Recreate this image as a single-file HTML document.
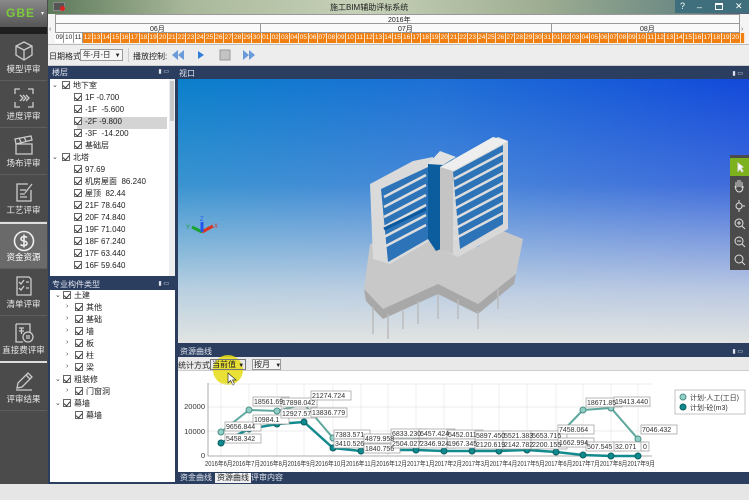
<!DOCTYPE html>
<html><head><meta charset="utf-8"><style>
*{margin:0;padding:0;box-sizing:border-box}
body{width:749px;height:500px;overflow:hidden;background:#e6e6e6;font-family:"Liberation Sans","Noto Sans CJK SC",sans-serif;font-size:8px;color:#222;position:relative}
.a{position:absolute;white-space:nowrap}
.side{left:0;top:0;width:48px;height:500px;background:#4b4b4b}
.nav{position:absolute;left:0;width:47px;height:47px;border-bottom:1px solid #5e5e5e;color:#e8e8e8;text-align:center;font-size:8.5px}
.nav span{position:absolute;left:0;right:0;bottom:5px}
.nav svg{position:absolute;left:13px;top:6px}
.hdr{background:#2b3e5f;color:#dfe4ee;font-size:8px;line-height:11px;padding-left:4px}
.tree{background:#fff}
.row{position:absolute;height:12px;line-height:12px;font-size:8px;white-space:nowrap}
.cb{display:inline-block;width:8px;height:8px;border:1px solid #666;vertical-align:-1px;margin-right:3px;position:relative;background:#fff}
.cb:after{content:"";position:absolute;left:1px;top:0px;width:3px;height:5px;border:solid #333;border-width:0 1px 1px 0;transform:rotate(40deg)}
.chev{position:absolute;font-size:7px;color:#444}
.days{left:55px;top:33px;height:10px;display:flex}
.days div{width:9.4px;height:10px;background:#f07f10;color:#fff;font-size:6.5px;line-height:10px;text-align:center;border-right:1px solid #fbe1c3}
.days div.w{background:#fff;color:#222;border-right:1px solid #999}
</style></head><body>

<div class="a" style="left:48px;top:0;width:701px;height:14px;background:linear-gradient(90deg,#5d7a5a,#a9b89a 20%,#c7d1b8 45%,#9fae92 70%,#6d8a84 90%,#557)"></div>
<div class="a" style="left:53px;top:2px;width:12px;height:9px;background:#555;border:1px solid #888"></div>
<div class="a" style="left:60px;top:6px;width:5px;height:5px;border-radius:50%;background:#d22"></div>
<div class="a" style="left:330px;top:2px;font-size:8px;color:#222">施工BIM辅助评标系统</div>
<div class="a" style="left:675px;top:0;width:74px;height:13px;background:#3f6f7c;color:#fff;font-size:9px;line-height:13px">
<span style="position:absolute;left:5px">?</span><span style="position:absolute;left:22px;top:-3px">_</span><span style="position:absolute;left:40px;top:3px;width:8px;height:7px;border:1px solid #fff;border-top-width:2px"></span><span style="position:absolute;left:60px">✕</span></div>

<div class="a" style="left:48px;top:14px;width:701px;height:31px;background:#f4f4f4;border-bottom:1px solid #bbb"></div>
<div class="a" style="left:55px;top:14px;width:685px;height:10px;border:1px solid #999;background:#fafafa"></div>
<div class="a" style="left:388px;top:15px;font-size:7px">2016年</div>
<div class="a" style="left:55px;top:24px;width:685px;height:9px;border:1px solid #999;border-top:none;background:#fafafa"></div>
<div class="a" style="left:260px;top:24px;width:1px;height:9px;background:#999"></div>
<div class="a" style="left:551px;top:24px;width:1px;height:9px;background:#999"></div>
<div class="a" style="left:150px;top:24px;font-size:7px">06月</div>
<div class="a" style="left:398px;top:24px;font-size:7px">07月</div>
<div class="a" style="left:640px;top:24px;font-size:7px">08月</div>
<div class="a" style="left:49px;top:26px;font-size:7px;color:#666">‹</div>
<div class="a" style="left:741px;top:26px;font-size:7px;color:#666">›</div>
<div class="a days">
<div class="w">09</div><div class="w">10</div><div class="w">11</div><div>12</div><div>13</div><div>14</div><div>15</div><div>16</div><div>17</div><div>18</div><div>19</div><div>20</div><div>21</div><div>22</div><div>23</div><div>24</div><div>25</div><div>26</div><div>27</div><div>28</div><div>29</div><div>30</div>
<div>01</div><div>02</div><div>03</div><div>04</div><div>05</div><div>06</div><div>07</div><div>08</div><div>09</div><div>10</div><div>11</div><div>12</div><div>13</div><div>14</div><div>15</div><div>16</div><div>17</div><div>18</div><div>19</div><div>20</div><div>21</div><div>22</div><div>23</div><div>24</div><div>25</div><div>26</div><div>27</div><div>28</div><div>29</div><div>30</div><div>31</div>
<div>01</div><div>02</div><div>03</div><div>04</div><div>05</div><div>06</div><div>07</div><div>08</div><div>09</div><div>10</div><div>11</div><div>12</div><div>13</div><div>14</div><div>15</div><div>16</div><div>17</div><div>18</div><div>19</div><div>20</div><div style="width:4px"></div>
</div>

<div class="a" style="left:48px;top:45px;width:701px;height:21px;background:#ededed;border-bottom:1px solid #ccc"></div>
<div class="a" style="left:49px;top:51px">日期格式:</div>
<div class="a" style="left:80px;top:49px;width:43px;height:12px;border:1px solid #999;background:#f6f6f6;line-height:10px;padding-left:2px;font-size:7.5px">年-月-日 <span style="font-size:6px;margin-left:2px">▼</span></div>
<div class="a" style="left:128px;top:48px;width:1px;height:14px;background:#ccc"></div>
<div class="a" style="left:133px;top:51px">播放控制:</div>
<svg class="a" style="left:171px;top:49px" width="90" height="12"><path d="M7 1L1 6L7 11ZM13 1L7 6L13 11Z" fill="#6b9bd8"/><path d="M27 2L33 6L27 10Z" fill="#2f7fd6"/><rect x="49" y="1" width="10" height="10" fill="#c4c4c4" stroke="#999"/><path d="M72 1L78 6L72 11ZM78 1L84 6L78 11Z" fill="#6b9bd8"/></svg>

<div class="a side">
<div class="a" style="left:0;top:0;width:47px;height:27px;background:linear-gradient(#8a8a8a,#555);"></div>
<div class="a" style="left:6px;top:6px;font-size:12px;font-weight:bold;color:#7dcb3a;letter-spacing:1px">GBE</div>
<div class="a" style="left:41px;top:10px;font-size:6px;color:#eee">▾</div>
<div class="a" style="left:0;top:27px;width:47px;height:7px;background:#1f1f1f"></div>
<div class="nav" style="top:34px"><svg width="22" height="22" viewBox="0 0 22 22" fill="none" stroke="#ccc" stroke-width="1.3"><path d="M11 2L19 6V15L11 20L3 15V6Z M3 6L11 10L19 6 M11 10V20"/></svg><span>模型评审</span></div>
<div class="nav" style="top:81px"><svg width="22" height="22" viewBox="0 0 22 22" fill="none" stroke="#ccc" stroke-width="1.3"><path d="M2 7V2H7M15 2H20V7M20 15V20H15M7 20H2V15M7 8L10 11L7 14M10 8L13 11L10 14M13 8L16 11L13 14"/></svg><span>进度评审</span></div>
<div class="nav" style="top:128px"><svg width="22" height="22" viewBox="0 0 22 22" fill="none" stroke="#ccc" stroke-width="1.3"><path d="M3 10H19V20H3Z M3 10L2 5L18 2L19 6Z M6 4L8 8M11 3L13 7"/></svg><span>场布评审</span></div>
<div class="nav" style="top:175px"><svg width="22" height="22" viewBox="0 0 22 22" fill="none" stroke="#ccc" stroke-width="1.3"><path d="M15 3H4V20H18V9 M7 9H13M7 13H12M7 16H14 M12 12L19 3"/></svg><span>工艺评审</span></div>
<div class="nav" style="top:222px;background:#6a6a6a;border-top:2px solid #ddd"><svg width="22" height="22" viewBox="0 0 22 22" fill="none" stroke="#eee" stroke-width="1.6"><circle cx="11" cy="11" r="9.5"/><path d="M14 7.5C13 6.5 8 6 8 9C8 12 14 10 14 13.5C14 16 9 16 7.5 14.5M11 4.5V17.5"/></svg><span style="color:#fff">资金资源</span></div>
<div class="nav" style="top:269px"><svg width="22" height="22" viewBox="0 0 22 22" fill="none" stroke="#ccc" stroke-width="1.3"><path d="M4 2H16L18 4V20H4Z M6 7L8 9L11 5M13 7H16M6 13L8 15L11 11M13 13H16"/></svg><span>清单评审</span></div>
<div class="nav" style="top:316px;border-bottom:2px solid #ddd"><svg width="22" height="22" viewBox="0 0 22 22" fill="none" stroke="#ccc" stroke-width="1.3"><path d="M3 2H17V10 M10 20H3V2 M6 6H11M8.5 6V12M6 9H11"/><circle cx="15" cy="15" r="5"/><path d="M13 14H17M13 16H17"/></svg><span>直接费评审</span></div>
<div class="nav" style="top:364px"><svg width="22" height="22" viewBox="0 0 22 22" fill="none" stroke="#ccc" stroke-width="1.3"><path d="M4 18L5 13L15 3L19 7L9 17Z M13 5L17 9 M3 20H19"/></svg><span>评审结果</span></div>
</div>

<div class="a" style="left:48px;top:66px;width:130px;height:418px;background:#2b3e5f"></div>
<div class="a hdr" style="left:48px;top:67px;width:127px;height:12px">楼层<span style="position:absolute;right:6px;font-size:6px">▮ ▭</span></div>
<div class="a tree" style="left:50px;top:79px;width:125px;height:197px;overflow:hidden">
<div class="a" style="right:0;top:0;width:6px;height:197px;background:#eee"></div>
<div class="a" style="right:1px;top:2px;width:4px;height:40px;background:#c8c8c8"></div>
<div class="a" style="left:27px;top:38px;width:90px;height:12px;background:#d4d4d4"></div>
<div class="chev" style="left:2px;top:2px">⌄</div>
<div class="row" style="left:12px;top:1px"><span class="cb"></span>地下室</div>
<div class="row" style="left:24px;top:13px"><span class="cb"></span>1F -0.700</div>
<div class="row" style="left:24px;top:25px"><span class="cb"></span>-1F &nbsp;-5.600</div>
<div class="row" style="left:24px;top:37px"><span class="cb"></span>-2F -9.800</div>
<div class="row" style="left:24px;top:49px"><span class="cb"></span>-3F &nbsp;-14.200</div>
<div class="row" style="left:24px;top:61px"><span class="cb"></span>基础层</div>
<div class="chev" style="left:2px;top:74px">⌄</div>
<div class="row" style="left:12px;top:73px"><span class="cb"></span>北塔</div>
<div class="row" style="left:24px;top:85px"><span class="cb"></span>97.69</div>
<div class="row" style="left:24px;top:97px"><span class="cb"></span>机房屋面 &nbsp;86.240</div>
<div class="row" style="left:24px;top:109px"><span class="cb"></span>屋顶 &nbsp;82.44</div>
<div class="row" style="left:24px;top:121px"><span class="cb"></span>21F 78.640</div>
<div class="row" style="left:24px;top:133px"><span class="cb"></span>20F 74.840</div>
<div class="row" style="left:24px;top:145px"><span class="cb"></span>19F 71.040</div>
<div class="row" style="left:24px;top:157px"><span class="cb"></span>18F 67.240</div>
<div class="row" style="left:24px;top:169px"><span class="cb"></span>17F 63.440</div>
<div class="row" style="left:24px;top:181px"><span class="cb"></span>16F 59.640</div>
</div>
<div class="a hdr" style="left:48px;top:279px;width:127px;height:11px">专业构件类型<span style="position:absolute;right:6px;font-size:6px">▮ ▭</span></div>
<div class="a tree" style="left:50px;top:290px;width:125px;height:192px">
<div class="chev" style="left:5px;top:1px">⌄</div>
<div class="row" style="left:13px;top:0px"><span class="cb"></span>土建</div>
<div class="chev" style="left:16px;top:13px">›</div><div class="row" style="left:25px;top:12px"><span class="cb"></span>其他</div>
<div class="chev" style="left:16px;top:25px">›</div><div class="row" style="left:25px;top:24px"><span class="cb"></span>基础</div>
<div class="chev" style="left:16px;top:37px">›</div><div class="row" style="left:25px;top:36px"><span class="cb"></span>墙</div>
<div class="chev" style="left:16px;top:49px">›</div><div class="row" style="left:25px;top:48px"><span class="cb"></span>板</div>
<div class="chev" style="left:16px;top:61px">›</div><div class="row" style="left:25px;top:60px"><span class="cb"></span>柱</div>
<div class="chev" style="left:16px;top:73px">›</div><div class="row" style="left:25px;top:72px"><span class="cb"></span>梁</div>
<div class="chev" style="left:5px;top:85px">⌄</div><div class="row" style="left:13px;top:84px"><span class="cb"></span>粗装修</div>
<div class="chev" style="left:16px;top:97px">›</div><div class="row" style="left:25px;top:96px"><span class="cb"></span>门窗洞</div>
<div class="chev" style="left:5px;top:109px">⌄</div><div class="row" style="left:13px;top:108px"><span class="cb"></span>幕墙</div>
<div class="row" style="left:25px;top:120px"><span class="cb"></span>幕墙</div>
</div>

<div class="a" style="left:178px;top:66px;width:571px;height:418px;background:#2b3e5f"></div>
<div class="a hdr" style="left:178px;top:69px;width:571px;height:10px;line-height:10px;padding-left:1px">视口<span style="position:absolute;right:6px;font-size:6px">▮ ▭</span></div>
<div class="a" style="left:178px;top:79px;width:571px;height:264px;background:linear-gradient(180deg,rgba(230,232,232,0) 0%,rgba(200,210,225,0.25) 40%,rgba(215,222,228,0.85) 80%,#e2e4e2 100%),linear-gradient(90deg,#0a7fcb 0%,#1d6fd6 45%,#1249da 100%)"></div>
<svg class="a" style="left:178px;top:79px" width="571" height="264">
<path d="M192 165L250 150L300 168L320 150L345 160L338 195L300 225L260 205L205 230L186 210Z" fill="#c8c8c8"/>
<path d="M186 210L205 230L260 205L300 225L338 195L336 205L300 235L260 215L205 240L188 222Z" fill="#a8a8a8"/>
<path d="M195 228V255M210 235V260M225 232V250M240 222V245M260 215V240M280 220V240M300 232V250M320 210V230" stroke="#bbb" stroke-width="1.5"/>
<path d="M192 105L235 82L255 78V160L212 185L195 180Z" fill="#dadada"/>
<path d="M203 110L250 88V160L210 183Z" fill="#2c73b8"/>
<path d="M206 118L248 96M206 128L248 106M206 138L248 116M206 148L248 126M206 158L248 136M206 168L248 146" stroke="#ddd" stroke-width="2.5"/>
<path d="M206 150L248 130" stroke="#0b5aa0" stroke-width="3"/>
<path d="M250 85L265 73L275 80V165L258 172L250 160Z" fill="#0b5d9e"/>
<path d="M250 85L262 72L278 78L265 86Z" fill="#e2e2e2"/>
<path d="M262 88L320 58L330 62V150L280 178L262 170Z" fill="#d8d8d8"/>
<path d="M275 93L325 66V145L282 170Z" fill="#2c73b8"/>
<path d="M276 100L325 74M276 110L325 84M276 120L325 94M276 130L325 104M276 140L325 114M276 150L325 124M276 160L325 134" stroke="#ddd" stroke-width="2.5"/>
<path d="M262 88L315 58L330 62L275 92Z" fill="#eee"/>
<path d="M262 88L275 92V175L262 170Z" fill="#c4c4c4"/>
<path d="M24 153L14 148M24 153L33 148" stroke="#19a32f" stroke-width="3"/>
<path d="M24 153L35 147" stroke="#d32" stroke-width="3"/>
<path d="M24 153V143" stroke="#2255ee" stroke-width="3"/>
<text x="22" y="142" font-size="6" fill="#2255ee">Z</text><text x="8" y="150" font-size="6" fill="#19a32f">Y</text><text x="36" y="149" font-size="6" fill="#d32">X</text>
</svg>
<div class="a" style="left:730px;top:155px;width:19px;height:115px;background:#4b4b4b"></div>
<div class="a" style="left:730px;top:158px;width:19px;height:18px;background:#7db11e"></div>
<svg class="a" style="left:730px;top:158px" width="19" height="112" fill="none" stroke="#ddd" stroke-width="1"><path d="M8 5L8 13L10 11L12 14L13 13L11 10L13 9Z" fill="#fff"/><path d="M6 30V24M8 29V22M10 29V22M12 30V24M5 28Q6 34 9 34Q13 34 13 28"/><circle cx="9" cy="48" r="3"/><path d="M9 42V45M9 51V54M12 48H15"/><circle cx="9" cy="65" r="4"/><path d="M12 68L15 71M7 65H11M9 63V67"/><circle cx="9" cy="83" r="4"/><path d="M12 86L15 89M7 83H11"/><circle cx="9" cy="101" r="4"/><path d="M12 104L15 107"/></svg>

<div class="a hdr" style="left:178px;top:347px;width:571px;height:10px;line-height:10px;padding-left:2px">资源曲线<span style="position:absolute;right:6px;font-size:6px">▮ ▭</span></div>
<div class="a" style="left:178px;top:357px;width:571px;height:14px;background:#e9e9e9;border-bottom:1px solid #ccc"></div>
<div class="a" style="left:178px;top:360px">统计方式</div>
<div class="a" style="left:252px;top:359px;width:29px;height:11px;border:1px solid #999;background:#f4f4f4;line-height:9px;padding-left:1px">按月 <span style="font-size:6px;margin-left:3px">▼</span></div>
<div class="a" style="left:178px;top:371px;width:571px;height:101px;background:#fff"></div>
<div class="a" style="left:213px;top:355px;width:30px;height:30px;border-radius:50%;background:rgba(230,220,20,0.85)"></div>
<div class="a" style="left:210px;top:359px;width:36px;height:11px;border:1px solid #777;line-height:9px;padding-left:1px;color:#222">当前值 <span style="font-size:6px">▼</span></div>
<svg class="a" style="left:227px;top:372px" width="10" height="14"><path d="M1 1V11L3.5 8.5L6 13L7.5 12L5.5 8H9Z" fill="#fff" stroke="#333" stroke-width="0.7"/></svg>
<svg class="a" style="left:178px;top:371px" width="571" height="101" font-family="Liberation Sans" font-size="7.5">
<g stroke="#e8e8e8" stroke-width="0.7">
<path d="M30 13H474M30 36H474M30 60H474M30 85H474"/>
<path d="M43 12V85M71 12V85M99 12V85M126 12V85M155 12V85M183 12V85M210 12V85M238 12V85M266 12V85M294 12V85M321 12V85M349 12V85M378 12V85M405 12V85M433 12V85M460 12V85"/>
</g>
<path d="M30 12V85H474" fill="none" stroke="#999" stroke-width="0.8"/>
<g fill="#333" text-anchor="end"><text x="27" y="38">20000</text><text x="27" y="63">10000</text><text x="27" y="87">0</text></g>
<text x="27" y="95" fill="#333" font-size="7" textLength="450" lengthAdjust="spacingAndGlyphs">2016年6月2016年7月2016年8月2016年9月2016年10月2016年11月2016年12月2017年1月2017年2月2017年3月2017年4月2017年5月2017年6月2017年7月2017年8月2017年9月</text>
<polyline fill="none" stroke="#5ea89e" stroke-width="2" points="43,61 71,39 99,40 126,33 155,67 183,73 210,68 238,69 266,72 294,71 321,71 349,71 378,67 405,39 433,37 460,68"/>
<polyline fill="none" stroke="#138b8e" stroke-width="2.5" points="43,72 71,58 99,53 126,51 155,77 183,80 210,79 238,79 266,80 294,80 321,80 349,79 378,81 405,84 433,85 460,85"/>
<g fill="#8fcfc6" stroke="#4d8f87"><circle cx="43" cy="61" r="3"/><circle cx="71" cy="39" r="3"/><circle cx="99" cy="40" r="3"/><circle cx="155" cy="67" r="3"/><circle cx="183" cy="73" r="3"/><circle cx="210" cy="68" r="3"/><circle cx="238" cy="69" r="3"/><circle cx="405" cy="39" r="3"/><circle cx="433" cy="37" r="3"/><circle cx="460" cy="68" r="3"/></g>
<g fill="#0f8b8f" stroke="#0a5f62"><circle cx="43" cy="72" r="3"/><circle cx="71" cy="58" r="3"/><circle cx="99" cy="53" r="3"/><circle cx="126" cy="51" r="3"/><circle cx="155" cy="77" r="3"/><circle cx="183" cy="80" r="3"/><circle cx="210" cy="79" r="3"/><circle cx="238" cy="79" r="3"/><circle cx="266" cy="80" r="3"/><circle cx="294" cy="80" r="3"/><circle cx="321" cy="80" r="3"/><circle cx="349" cy="79" r="3"/><circle cx="378" cy="81" r="3"/><circle cx="405" cy="84" r="3"/><circle cx="433" cy="85" r="3"/><circle cx="460" cy="85" r="3"/></g>
<g fill="#fff" stroke="#999" stroke-width="0.7">
<rect x="47" y="51" width="36" height="9"/><rect x="47" y="63" width="36" height="9"/><rect x="75" y="26" width="36" height="9"/><rect x="75" y="44" width="36" height="9"/><rect x="103" y="27" width="36" height="9"/><rect x="103" y="38" width="36" height="9"/><rect x="133" y="20" width="40" height="9"/><rect x="133" y="37" width="36" height="9"/><rect x="156" y="59" width="36" height="9"/><rect x="156" y="68" width="36" height="9"/><rect x="186" y="63" width="36" height="9"/><rect x="186" y="73" width="36" height="9"/><rect x="213" y="58" width="36" height="9"/><rect x="213" y="68" width="36" height="9"/><rect x="241" y="58" width="36" height="9"/><rect x="241" y="68" width="36" height="9"/><rect x="269" y="59" width="36" height="9"/><rect x="269" y="68" width="36" height="9"/><rect x="297" y="60" width="36" height="9"/><rect x="297" y="69" width="36" height="9"/><rect x="325" y="60" width="36" height="9"/><rect x="325" y="69" width="36" height="9"/><rect x="353" y="60" width="36" height="9"/><rect x="353" y="69" width="36" height="9"/><rect x="380" y="54" width="36" height="9"/><rect x="380" y="67" width="36" height="9"/><rect x="408" y="27" width="36" height="9"/><rect x="408" y="71" width="36" height="9"/><rect x="436" y="26" width="36" height="9"/><rect x="436" y="71" width="30" height="9"/><rect x="463" y="54" width="36" height="9"/><rect x="463" y="71" width="8" height="9"/>
</g>
<g fill="#333" font-size="7">
<text x="48" y="58">9656.844</text><text x="48" y="70">5458.342</text><text x="76" y="33">18561.69</text><text x="76" y="51">10984.1</text><text x="104" y="34">17898.042</text><text x="104" y="45">12927.57</text><text x="134" y="27">21274.724</text><text x="134" y="44">13836.779</text><text x="157" y="66">7383.571</text><text x="157" y="75">3410.526</text><text x="187" y="70">4879.958</text><text x="187" y="80">1840.756</text><text x="214" y="65">6833.230</text><text x="214" y="75">2504.027</text><text x="242" y="65">6457.424</text><text x="242" y="75">2346.924</text><text x="270" y="66">5452.011</text><text x="270" y="75">1967.345</text><text x="298" y="67">5897.450</text><text x="298" y="76">2120.619</text><text x="326" y="67">5521.383</text><text x="326" y="76">2142.782</text><text x="354" y="67">5653.716</text><text x="354" y="76">2200.155</text><text x="381" y="61">7458.064</text><text x="381" y="74">1662.994</text><text x="409" y="34">18671.85</text><text x="409" y="78">507.545</text><text x="437" y="33">19413.440</text><text x="437" y="78">32.071</text><text x="464" y="61">7046.432</text><text x="465" y="78">0</text>
</g>
<rect x="497" y="19" width="70" height="24" fill="#fff" stroke="#aaa" stroke-width="0.7"/>
<circle cx="505" cy="26" r="3" fill="#8fcfc6" stroke="#4d8f87"/><circle cx="505" cy="36" r="3" fill="#0f8b8f" stroke="#0a5f62"/>
<text x="512" y="29" fill="#333" font-size="7">计划-人工(工日)</text><text x="512" y="39" fill="#333" font-size="7">计划-砼(m3)</text>
</svg>
<div class="a" style="left:178px;top:472px;width:571px;height:12px;background:#2b3e5f;color:#dfe4ee;line-height:12px;font-size:8px">
<span style="position:absolute;left:2px">资金曲线</span><span style="position:absolute;left:37px;top:1px;height:10px;line-height:10px;background:#f0f0f0;color:#222;padding:0 2px">资源曲线</span><span style="position:absolute;left:73px">评审内容</span></div>
<div class="a" style="left:0;top:484px;width:749px;height:16px;background:#e6e6e6"></div>
</body></html>
